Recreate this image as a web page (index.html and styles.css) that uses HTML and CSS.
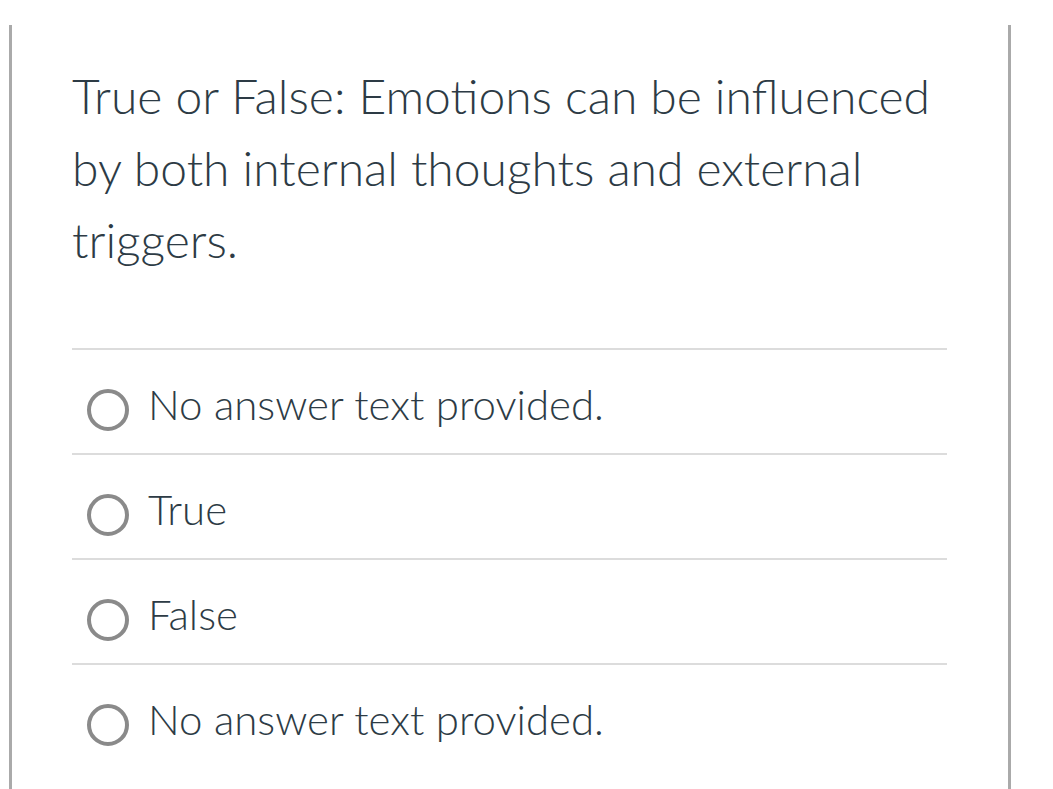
FILE: index.html
```html
<!DOCTYPE html>
<html lang="en">
<head>
<meta charset="utf-8">
<title>Quiz question</title>
<link rel="stylesheet" href="styles.css">
</head>
<body>
<div class="frame">
  <div class="question">
    <p class="question-text">True or False: Emotions can be influenced by both internal thoughts and external triggers.</p>
    <div class="answers">
      <label class="answer"><span class="radio"></span><span class="answer-text">No answer text provided.</span></label>
      <label class="answer"><span class="radio"></span><span class="answer-text">True</span></label>
      <label class="answer"><span class="radio"></span><span class="answer-text">False</span></label>
      <label class="answer"><span class="radio"></span><span class="answer-text">No answer text provided.</span></label>
    </div>
  </div>
</div>
</body>
</html>
```

FILE: styles.css
```css
html, body {
  margin: 0;
  padding: 0;
  background: #ffffff;
}
body {
  font-family: Lato, "Open Sans", sans-serif;
  color: #2d3b45;
  overflow: hidden;
  height: 789px;
}
.frame {
  margin: 25px 0 0 9px;
  width: 875px;
  height: 729px;
  border-left: 3px solid #aaaaaa;
  border-right: 3px solid #aaaaaa;
  padding: 35px 61px 0 60px;
}
.question-text {
  margin: 0;
  font-size: 48px;
  font-weight: 300;
  line-height: 72px;
}
.answers {
  margin-top: 72px;
  border-top: 2px solid #dcdcdc;
}
.answer {
  display: flex;
  align-items: center;
  gap: 19px;
  padding: 25px 0 20px 15px;
  border-bottom: 2px solid #dcdcdc;
}
.answer:last-child {
  border-bottom: none;
}
.radio {
  flex: none;
  width: 34px;
  height: 34px;
  border: 4px solid #8a8a8a;
  border-radius: 50%;
  margin-top: 12px;
}
.answer-text {
  font-size: 42px;
  font-weight: 300;
  line-height: 58px;
}
```
